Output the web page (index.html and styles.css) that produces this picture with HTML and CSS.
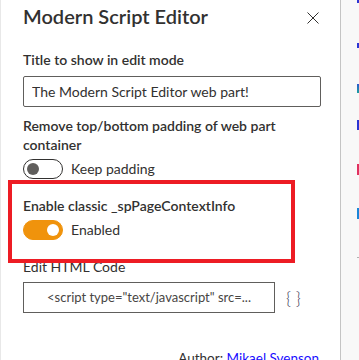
FILE: index.html
```html
<!DOCTYPE html>
<html lang="en">
<head>
  <meta charset="UTF-8">
  <title>Modern Script Editor - properties</title>
  <link rel="stylesheet" href="styles.css">
</head>
<body>

  <div class="panel">
    <div class="panel-header">
      <h2>Modern Script Editor</h2>
      <button class="close" aria-label="Close">
        <svg width="12" height="12" viewBox="0 0 12 12">
          <path d="M0.5 0.5 L11.5 11.5 M11.5 0.5 L0.5 11.5" stroke="#323130" stroke-width="1" fill="none"/>
        </svg>
      </button>
    </div>

    <label class="field-label label-title">Title to show in edit mode</label>
    <input class="text-field" type="text" value="The Modern Script Editor web part!">

    <label class="field-label label-padding">Remove top/bottom padding of web part container</label>
    <div class="toggle-row row-padding">
      <span class="toggle"><span class="knob"></span></span>
      <span class="toggle-text">Keep padding</span>
    </div>

    <label class="field-label label-classic">Enable classic _spPageContextInfo</label>
    <div class="toggle-row row-classic">
      <span class="toggle is-on"><span class="knob"></span></span>
      <span class="toggle-text">Enabled</span>
    </div>

    <label class="plain-label">Edit HTML Code</label>
    <div class="code-row">
      <div class="code-field">&lt;script type="text/javascript" src=...</div>
      <span class="braces">{ }</span>
    </div>

    <p class="author">Author: <a href="#">Mikael Svenson</a></p>

    <!-- annotation box drawn over the toggle -->
    <div class="highlight"></div>
  </div>

  <div class="toolbox">
    <span class="tb tb-1"></span>
    <span class="tb tb-2"></span>
    <span class="tb tb-3"></span>
    <span class="tb tb-4"></span>
    <span class="tb tb-5"></span>
    <span class="tb tb-6"></span>
    <span class="tb tb-7"></span>
  </div>

</body>
</html>
```

FILE: styles.css
```css
html {
  font-family: 'Lato', 'Liberation Sans', sans-serif;
  color: #323130;
}

body {
  margin: 0;
  width: 359px;
  height: 360px;
  overflow: hidden;
  display: flex;
  align-items: flex-start;
  background: #f8f8f8;
}

.panel {
  position: relative;
  width: 341px;
  height: 360px;
  flex-shrink: 0;
  box-sizing: border-box;
  padding: 0 21px 0 22px;
  background: #fff;
  border-left: 1px solid #e8e8e8;
  border-right: 1px solid #c4c4c4;
}

.panel-header {
  display: flex;
  justify-content: space-between;
  align-items: flex-start;
  padding-top: 2px;
}

.panel-header h2 {
  margin: 0;
  font-size: 20px;
  line-height: 28px;
  font-weight: 600;
}

.close {
  border: 0;
  background: none;
  padding: 0;
  margin: 10px 0 0 0;
  width: 12px;
  height: 12px;
  display: block;
}

.close svg {
  display: block;
}

.field-label {
  display: block;
  font-size: 14px;
  line-height: 19px;
  font-weight: 600;
}

.label-title {
  margin-top: 20px;
}

.text-field {
  display: block;
  margin-top: 7px;
  box-sizing: border-box;
  width: 298px;
  height: 31px;
  border: 1px solid #605e5c;
  border-radius: 2px;
  padding: 0 8px;
  font-family: inherit;
  font-size: 14px;
  color: #323130;
  outline: none;
}

.label-padding {
  margin-top: 9px;
}

.toggle-row {
  display: flex;
  align-items: center;
  gap: 8px;
  font-size: 14px;
  line-height: 20px;
}

.row-padding {
  margin-top: 5px;
}

.label-classic {
  margin-top: 17px;
}

.row-classic {
  margin-top: 5px;
}

.toggle {
  position: relative;
  box-sizing: border-box;
  width: 40px;
  height: 20px;
  border: 1px solid #323130;
  border-radius: 10px;
  background: #fff;
}

.knob {
  position: absolute;
  top: 3px;
  left: 3px;
  width: 12px;
  height: 12px;
  border-radius: 50%;
  background: #605e5c;
}

.toggle.is-on {
  background: #f0930c;
  border-color: #f0930c;
}

.toggle.is-on .knob {
  left: auto;
  right: 3px;
  background: #fff;
}

.plain-label {
  display: block;
  margin-top: 17px;
  font-size: 14px;
  line-height: 19px;
}

.code-row {
  margin-top: 6px;
  display: flex;
  align-items: center;
  gap: 11px;
}

.code-field {
  box-sizing: border-box;
  width: 252px;
  height: 31px;
  padding: 0 8px;
  border: 1px solid #605e5c;
  font-size: 13px;
  line-height: 29px;
  color: #484644;
  text-align: center;
  white-space: nowrap;
  overflow: hidden;
}

.braces {
  font-size: 17px;
  font-weight: 300;
  color: #3b3a55;
}

.author {
  margin: 36px 0 0 0;
  font-size: 13.5px;
  line-height: 19px;
  text-align: right;
}

.author a {
  color: #1a0dff;
  text-decoration: none;
}

.highlight {
  position: absolute;
  left: 7px;
  top: 180px;
  width: 287px;
  height: 83px;
  box-sizing: border-box;
  border: 4px solid #ed1c24;
}

.toolbox {
  flex: 1;
  display: flex;
  flex-direction: column;
  align-items: flex-end;
}

.tb {
  display: block;
  width: 2px;
}

.tb-1 { height: 3px; background: #2b35d4; }
.tb-2 { height: 5px; margin-top: 40px; background: #2b35d4; }
.tb-3 { height: 9px; margin-top: 36px; background: linear-gradient(#2a5ad0, #1aa0a0); }
.tb-4 { height: 10px; margin-top: 27px; background: #2b35d4; }
.tb-5 { height: 11px; margin-top: 34px; background: #e03060; }
.tb-6 { height: 11px; margin-top: 33px; background: #1a86d8; }
.tb-7 { height: 1px; margin-top: 38px; background: #b0b0b0; }
```
